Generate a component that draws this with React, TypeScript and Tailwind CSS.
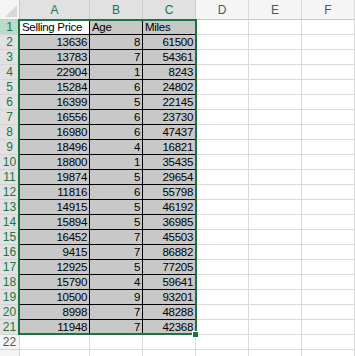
import React from 'react'

const rows: [number, number, number][] = [
  [13636, 8, 61500],
  [13783, 7, 54361],
  [22904, 1, 8243],
  [15284, 6, 24802],
  [16399, 5, 22145],
  [16556, 6, 23730],
  [16980, 6, 47437],
  [18496, 4, 16821],
  [18800, 1, 35435],
  [19874, 5, 29654],
  [11816, 6, 55798],
  [14915, 5, 46192],
  [15894, 5, 36985],
  [16452, 7, 45503],
  [9415, 7, 86882],
  [12925, 5, 77205],
  [15790, 4, 59641],
  [10500, 9, 93201],
  [8998, 7, 48288],
  [11948, 7, 42368],
]

const cols = ['A', 'B', 'C', 'D', 'E', 'F']

function RowHeader({ n, active }: { n?: number; active?: 'cur' | 'sel' }) {
  const bg = active === 'cur' ? 'bg-[#b9dcc8]' : active === 'sel' ? 'bg-[#e1e1e1]' : 'bg-[#f5f5f5]'
  const fg = active ? 'text-[#217346]' : 'text-[#555]'
  return (
    <div
      className={`flex items-center justify-center text-[12px] border-r border-b border-[#d4d4d4] ${bg} ${fg}`}
    >
      {n}
    </div>
  )
}

function Empty() {
  return <div className="border-r border-b border-[#dadada] bg-white" />
}

function Data({ children, left, white }: { children: React.ReactNode; left?: boolean; white?: boolean }) {
  return (
    <div
      className={`flex items-center px-[2px] pt-[1px] border-r border-b border-black tracking-[-0.3px] ${
        left ? 'justify-start' : 'justify-end'
      } ${white ? 'bg-white' : 'bg-[#c8c8c8]'}`}
    >
      {children}
    </div>
  )
}

function EmptyRow({ n }: { n?: number }) {
  return (
    <>
      <RowHeader n={n} />
      <Empty />
      <Empty />
      <Empty />
      <Empty />
      <Empty />
      <Empty />
    </>
  )
}

export default function App() {
  return (
    <div className="relative w-[355px] h-[356px] bg-white overflow-hidden font-['Liberation_Sans',Arial,sans-serif] text-[11.5px] text-black leading-none">
      <div className="grid grid-cols-[20px_70px_53px_53px_53px_53px_53px] grid-rows-[20px] auto-rows-[15px]">
        {/* corner */}
        <div className="relative border-r border-b border-[#c8c8c8] bg-[#f5f5f5]">
          <div className="absolute right-[2px] bottom-[2px] w-0 h-0 border-l-[12px] border-l-transparent border-b-[12px] border-b-[#d9d9d9]" />
        </div>
        {cols.map((c, i) => (
          <div
            key={c}
            className={`flex items-center justify-center text-[12px] border-r border-b ${
              i < 3
                ? 'bg-[#e1e1e1] text-[#217346] border-r-[#cfcfcf] border-b-[#c8c8c8]'
                : 'bg-[#f5f5f5] text-[#555] border-r-[#dadada] border-b-[#c8c8c8]'
            }`}
          >
            {c}
          </div>
        ))}

        {/* row 1 */}
        <RowHeader n={1} active="cur" />
        <Data left white>Selling Price</Data>
        <Data left>Age</Data>
        <Data left>Miles</Data>
        <Empty />
        <Empty />
        <Empty />

        {rows.map((r, i) => (
          <React.Fragment key={i}>
            <RowHeader n={i + 2} active="sel" />
            <Data>{r[0]}</Data>
            <Data>{r[1]}</Data>
            <Data>{r[2]}</Data>
            <Empty />
            <Empty />
            <Empty />
          </React.Fragment>
        ))}

        <EmptyRow n={22} />
        <EmptyRow />
      </div>

      {/* selection outline */}
      <div className="absolute left-[18px] top-[19px] w-[179px] h-[316px] border-2 border-[#1e7145] pointer-events-none" />
      <div className="absolute left-[192px] top-[331px] w-[7px] h-[7px] bg-[#1e7145] border border-white" />
    </div>
  )
}
